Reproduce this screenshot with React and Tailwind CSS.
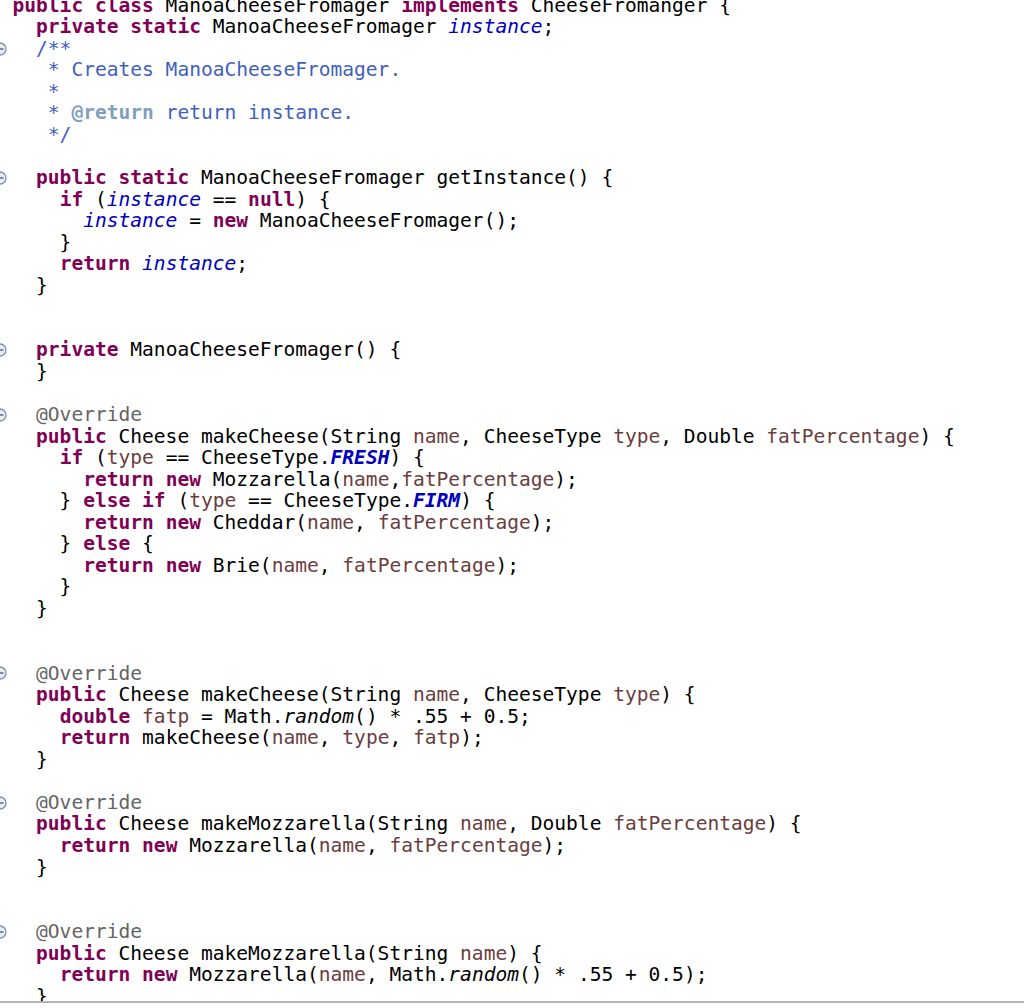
import React from 'react';

// token styles (Eclipse Java colouring)
const K = 'text-[#7f0055] font-bold';
const F = 'text-[#0000c0] italic';
const C = 'text-[#0000c0] italic font-bold';
const D = 'text-[#3f5fbf]';
const T = 'text-[#7f9fbf] font-bold';
const A = 'text-[#646464]';
const P = 'text-[#6a3e3e]';
const I = 'italic';

const lines = [
  [[K, 'public'], ' ', [K, 'class'], ' ManoaCheeseFromager ', [K, 'implements'], ' CheeseFromanger {'],
  ['  ', [K, 'private'], ' ', [K, 'static'], ' ManoaCheeseFromager ', [F, 'instance'], ';'],
  { fold: true, parts: ['  ', [D, '/**']] },
  ['   ', [D, '* Creates ManoaCheeseFromager.']],
  ['   ', [D, '*']],
  ['   ', [D, '* '], [T, '@return'], [D, ' return instance.']],
  ['   ', [D, '*/']],
  [],
  { fold: true, parts: ['  ', [K, 'public'], ' ', [K, 'static'], ' ManoaCheeseFromager getInstance() {'] },
  ['    ', [K, 'if'], ' (', [F, 'instance'], ' == ', [K, 'null'], ') {'],
  ['      ', [F, 'instance'], ' = ', [K, 'new'], ' ManoaCheeseFromager();'],
  ['    }'],
  ['    ', [K, 'return'], ' ', [F, 'instance'], ';'],
  ['  }'],
  [],
  [],
  { fold: true, parts: ['  ', [K, 'private'], ' ManoaCheeseFromager() {'] },
  ['  }'],
  [],
  { fold: true, parts: ['  ', [A, '@Override']] },
  ['  ', [K, 'public'], ' Cheese makeCheese(String ', [P, 'name'], ', CheeseType ', [P, 'type'], ', Double ', [P, 'fatPercentage'], ') {'],
  ['    ', [K, 'if'], ' (', [P, 'type'], ' == CheeseType.', [C, 'FRESH'], ') {'],
  ['      ', [K, 'return'], ' ', [K, 'new'], ' Mozzarella(', [P, 'name'], ',', [P, 'fatPercentage'], ');'],
  ['    } ', [K, 'else'], ' ', [K, 'if'], ' (', [P, 'type'], ' == CheeseType.', [C, 'FIRM'], ') {'],
  ['      ', [K, 'return'], ' ', [K, 'new'], ' Cheddar(', [P, 'name'], ', ', [P, 'fatPercentage'], ');'],
  ['    } ', [K, 'else'], ' {'],
  ['      ', [K, 'return'], ' ', [K, 'new'], ' Brie(', [P, 'name'], ', ', [P, 'fatPercentage'], ');'],
  ['    }'],
  ['  }'],
  [],
  [],
  { fold: true, parts: ['  ', [A, '@Override']] },
  ['  ', [K, 'public'], ' Cheese makeCheese(String ', [P, 'name'], ', CheeseType ', [P, 'type'], ') {'],
  ['    ', [K, 'double'], ' ', [P, 'fatp'], ' = Math.', [I, 'random'], '() * .55 + 0.5;'],
  ['    ', [K, 'return'], ' makeCheese(', [P, 'name'], ', ', [P, 'type'], ', ', [P, 'fatp'], ');'],
  ['  }'],
  [],
  { fold: true, parts: ['  ', [A, '@Override']] },
  ['  ', [K, 'public'], ' Cheese makeMozzarella(String ', [P, 'name'], ', Double ', [P, 'fatPercentage'], ') {'],
  ['    ', [K, 'return'], ' ', [K, 'new'], ' Mozzarella(', [P, 'name'], ', ', [P, 'fatPercentage'], ');'],
  ['  }'],
  [],
  [],
  { fold: true, parts: ['  ', [A, '@Override']] },
  ['  ', [K, 'public'], ' Cheese makeMozzarella(String ', [P, 'name'], ') {'],
  ['    ', [K, 'return'], ' ', [K, 'new'], ' Mozzarella(', [P, 'name'], ', Math.', [I, 'random'], '() * .55 + 0.5);'],
  ['  }'],
];

const FoldMarker = () => (
  <svg width="12" height="14" viewBox="0 0 12 14" className="block">
    <circle cx="0" cy="7" r="6" fill="#e8edf4" stroke="#7d8fa8" strokeWidth="1.3" />
    <line x1="0" y1="7" x2="3.5" y2="7" stroke="#4f6380" strokeWidth="1.4" />
  </svg>
);

const CodeLine = ({ line }) => {
  const fold = !Array.isArray(line) && line.fold;
  const parts = Array.isArray(line) ? line : line.parts;
  return (
    <div className="flex items-center h-[21.55px]">
      <div className="w-[12.5px] shrink-0 flex items-center">{fold && <FoldMarker />}</div>
      <div className="whitespace-pre text-black">
        {parts.map((p, i) =>
          typeof p === 'string' ? <span key={i}>{p}</span> : <span key={i} className={p[0]}>{p[1]}</span>
        )}
        {parts.length === 0 && ' '}
      </div>
    </div>
  );
};

export default function App() {
  return (
    <div className="w-[1024px] h-[1008px] bg-white overflow-hidden flex flex-col">
      <div className="h-[1001px] overflow-hidden shrink-0">
        <div className="-mt-[5.3px] font-['DejaVu_Sans_Mono',monospace] text-[19.57px] leading-[21.55px]">
          {lines.map((l, i) => (
            <CodeLine key={i} line={l} />
          ))}
        </div>
      </div>
      <div className="h-[2px] bg-[#b3b3b3] shrink-0" />
      <div className="flex-1 bg-white" />
    </div>
  );
}
